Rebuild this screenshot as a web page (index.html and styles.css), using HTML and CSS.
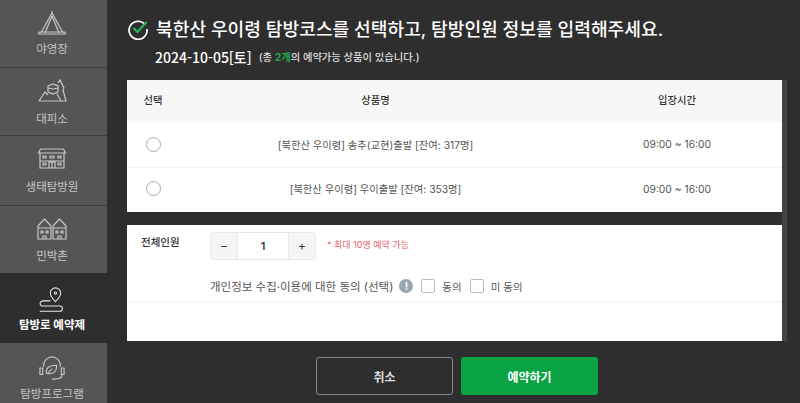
FILE: index.html
```html
<!DOCTYPE html>
<html lang="ko">
<head>
<meta charset="utf-8">
<title>탐방로 예약제</title>
<link rel="stylesheet" href="styles.css">
</head>
<body>
<div class="app">
  <nav class="side">
    <a class="nav-item i-camp">
      <svg class="ico" viewBox="0 0 30 26"><path d="M15 1v3M15 3 4 23M15 3l11 20M15 6 8 23M15 6l7 17M2.500 22h25a1 1 0 0 1 0 2h-25a1 1 0 0 1 0-2Z"/></svg>
      <span>야영장</span>
    </a>
    <a class="nav-item i-shelter">
      <svg class="ico" viewBox="0 0 30 26"><path d="M2 23 8 14l3 3M11 8l5-2 5 2v6l-5 2-5-2V8ZM11 10l5 1 5-1M21 5l2-3 3 6 1 2-1 2 3 11H2M20 16l4 7"/></svg>
      <span>대피소</span>
    </a>
    <a class="nav-item i-center">
      <svg class="ico" viewBox="0 0 30 26"><path d="M3.500 3h23l2 4h-27l2-4ZM3 7v15h24V7M3 15h24M12 22v-6h6v6M15 16v6M6 10h3v2H6zM13 10h4v2h-4zM21 10h3v2h-3zM6 17h3v2H6zM21 17h3v2h-3z"/></svg>
      <span>생태탐방원</span>
    </a>
    <a class="nav-item i-stay">
      <svg class="ico" viewBox="0 0 30 26"><path d="M1 23V10l6.500-7L14 10v13H1ZM16 23V10l6.500-7L29 10v13H16ZM1 12h13M16 12h13M4 15h2v2H4zM9 15h2v2H9zM19 15h2v2h-2zM24 15h2v2h-2zM6 23v-3h3v3M21 23v-3h3v3"/></svg>
      <span>민박촌</span>
    </a>
    <a class="nav-item active">
      <svg class="ico" viewBox="0 0 32 30"><path d="M20 17c-4-4-6-7-6-10a6 6 0 0 1 12 0c0 3-2 6-6 10ZM14 16H6c-5 0-5 6 0 6h19c4 0 4 6 0 6H2"/><circle cx="20" cy="7" r="1.300"/></svg>
      <span>탐방로 예약제</span>
    </a>
    <a class="nav-item last">
      <svg class="ico" viewBox="0 0 32 28"><path d="M7 13v-2a9 9 0 0 1 18 0v2M3 14h3v7H3zM26 14h3v7h-3zM27 21c0 3-3 5-9 5h-2M10 20c-1-6 3-9 11-9 0 7-3 10-11 9ZM11 20l5-5"/></svg>
      <span>탐방프로그램</span>
    </a>
  </nav>
  <main class="main">
    <header class="head">
      <h1 class="title">
        <svg class="check" viewBox="0 0 22 22"><path class="check-ring" d="M18 6.500A9 9 0 1 0 20 11"/><path class="check-mark" d="m6.500 10 4 4 9-10"/></svg>
        북한산 우이령 탐방코스를 선택하고, 탐방인원 정보를 입력해주세요.
      </h1>
      <p class="sub"><b class="date">2024-10-05[토]</b><span class="count">(총 <em>2개</em>의 예약가능 상품이 있습니다.)</span></p>
    </header>
    <div class="scroll">
      <div class="panels">
        <section class="card">
          <div class="row head-row"><div>선택</div><div>상품명</div><div>입장시간</div></div>
          <div class="row body-row first"><div><i class="radio"></i></div><div>[북한산 우이령] 송추(교현)출발 [잔여: 317명]</div><div>09:00 ~ 16:00</div></div>
          <div class="row body-row second"><div><i class="radio"></i></div><div>[북한산 우이령] 우이출발 [잔여: 353명]</div><div>09:00 ~ 16:00</div></div>
        </section>
        <section class="card form">
          <div class="people">
            <div class="label">전체인원</div>
            <div class="stepper"><span class="step">−</span><span class="num">1</span><span class="step">+</span></div>
            <div class="limit">* 최대 10명 예약 가능</div>
          </div>
          <div class="agree">
            <span>개인정보 수집·이용에 대한 동의 (선택)</span>
            <i class="info">!</i>
            <i class="box"></i><span class="opt">동의</span>
            <i class="box"></i><span class="opt">미 동의</span>
          </div>
        </section>
      </div>
      <div class="track"></div>
    </div>
    <footer class="actions">
      <button class="btn cancel">취소</button>
      <button class="btn ok">예약하기</button>
    </footer>
  </main>
</div>
</body>
</html>
```
FILE: styles.css
```css
* { box-sizing: border-box; }
html, body { margin: 0; height: 403px; overflow: hidden; }
body { font-family: Inter, "Noto Sans CJK KR", "Noto Sans", sans-serif; background: #2e2e2e; }
.app { display: flex; height: 403px; }

.side { width: 107px; flex: none; display: flex; flex-direction: column; background: #555; }
.nav-item { display: flex; flex-direction: column; align-items: center; padding: 10px 3px 0 0; color: #c6c6c6; font-size: 11.500px; line-height: 16px; border-bottom: 1px solid #3f3f3f; }
.nav-item span { margin-top: 7px; }
.i-camp { height: 68px; }
.i-camp span { margin-top: 5px; }
.i-shelter { height: 68px; }
.i-center { height: 70px; }
.i-stay { height: 67px; border-bottom: 0; }
.i-stay span { margin-top: 6px; }
.ico { width: 30px; height: 26px; fill: none; stroke: #c8c8c8; stroke-width: 1.200; }
.active { height: 70px; padding-top: 14px; background: #2e2e2e; color: #fff; font-weight: 700; border-bottom: 0; }
.active .ico { stroke: #e8e8e8; }
.active span { margin-top: 4px; }
.last { border-bottom: 0; flex: 1; padding-top: 12px; }
.last span { margin-top: 5px; }

.main { flex: 1; min-width: 0; padding-left: 20px; display: flex; flex-direction: column; }
.head { height: 80px; padding-top: 16px; color: #fff; }
.title { margin: 0; display: flex; align-items: center; gap: 7px; font-size: 18.150px; font-weight: 500; line-height: 26px; white-space: nowrap; }
.check { width: 22px; height: 22px; flex: none; fill: none; stroke-width: 1.700; }
.check-ring { stroke: #fff; }
.check-mark { stroke: #2fb457; stroke-width: 2.200; }
.sub { margin: 5px 0 0 28px; display: flex; align-items: center; line-height: 20px; }
.date { font-family: "Noto Sans CJK KR", "Noto Sans", sans-serif; font-size: 14px; font-weight: 500; }
.count { margin-left: 7px; font-size: 10.300px; font-weight: 500; color: #ddd; }
.count em { font-style: normal; color: #22a94b; font-weight: 700; }

.scroll { display: flex; height: 261px; }
.panels { width: 655px; display: flex; flex-direction: column; gap: 13px; }
.track { width: 5px; background: #444; }
.card { background: #fff; }
.row { display: grid; grid-template-columns: 52px 393px 210px; align-items: center; text-align: center; font-size: 10.300px; color: #555; }
.head-row { height: 42px; padding-bottom: 3px; background: #f7f7f7; font-weight: 500; color: #333; }
.body-row { height: 45px; }
.first { padding-bottom: 1px; }
.second { padding-bottom: 3px; border-top: 1px solid #f2f2f2; }
.radio { display: block; width: 15px; height: 15px; margin-left: 19px; border: 1px solid #aaa; border-radius: 50%; }

.form { height: 116px; }
.people { display: flex; align-items: flex-start; padding: 8px 0 0 14px; }
.label { width: 69px; font-size: 10.500px; font-weight: 500; color: #333; line-height: 20px; }
.stepper { width: 106px; height: 28px; margin-top: -1px; display: flex; border: 1px solid #e8e8e8; border-radius: 3px; }
.step { width: 27px; background: #f5f5f5; text-align: center; line-height: 25px; font-size: 12px; color: #333; }
.step:first-child { border-right: 1px solid #e8e8e8; }
.step:last-child { border-left: 1px solid #e8e8e8; }
.num { flex: 1; text-align: center; font-size: 11px; font-weight: 600; line-height: 26px; color: #333; }
.limit { margin: 4px 0 0 11px; font-size: 9px; color: #e2636d; line-height: 16px; }
.agree { margin-top: 14px; height: 28px; padding: 0 0 3px 83px; display: flex; align-items: center; font-size: 11.500px; color: #555; border-bottom: 1px solid #f1f1f1; }
.info { width: 14px; height: 14px; margin-left: 6px; border-radius: 50%; background: #9aa5b1; color: #fff; font-style: normal; font-size: 10px; font-weight: 700; text-align: center; line-height: 14px; }
.box { width: 14px; height: 14px; margin-left: 8px; border: 1px solid #bbb; border-radius: 2px; }
.opt { margin-left: 7px; font-size: 10.500px; }

.actions { display: flex; gap: 8px; padding: 16px 0 0 189px; }
.btn { width: 137px; height: 38px; border-radius: 3px; font-family: inherit; font-size: 12px; font-weight: 700; padding: 0; }
.cancel { background: #2e2e2e; color: #ddd; border: 1px solid #888; }
.ok { background: #0aa344; color: #fff; border: 0; }
```
